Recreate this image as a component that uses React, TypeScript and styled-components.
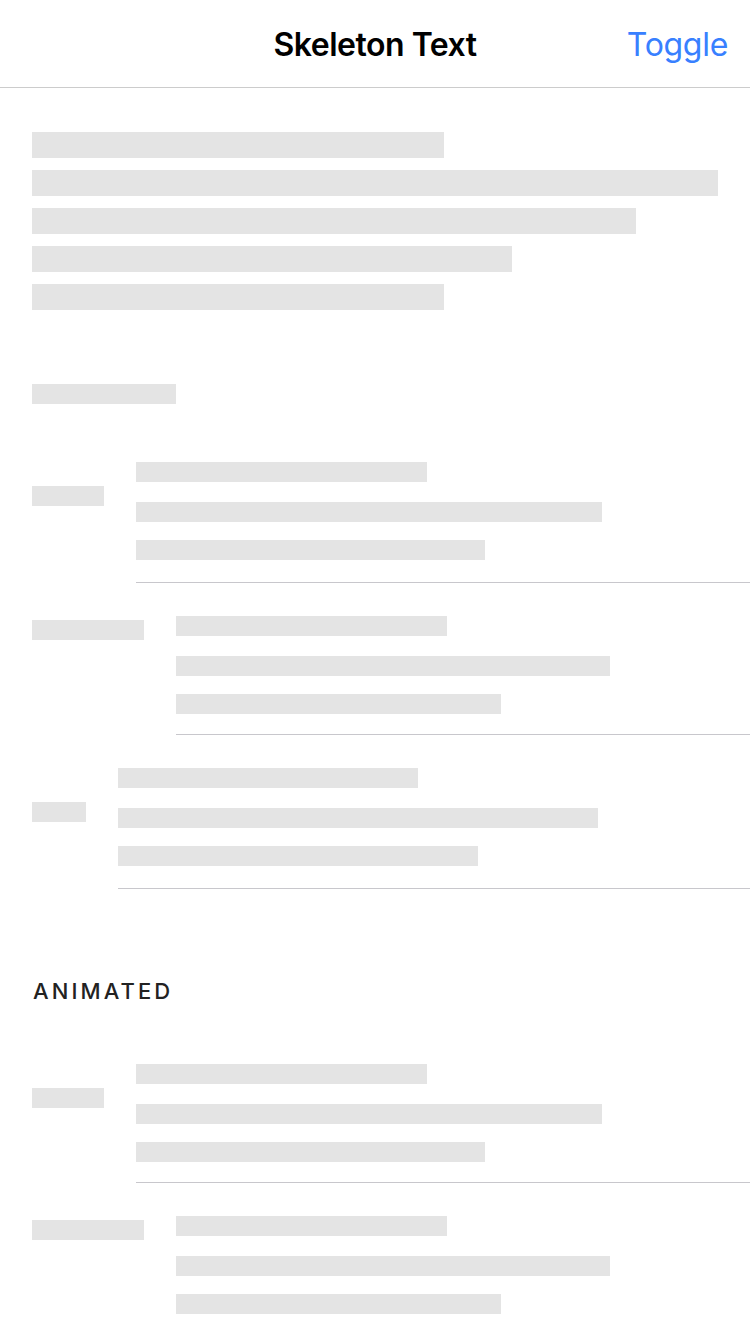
import React from "react";
import styled, { createGlobalStyle } from "styled-components";

const GlobalStyle = createGlobalStyle`
  html, body {
    margin: 0;
    padding: 0;
    background: #ffffff;
    font-family: Inter, "Noto Sans", sans-serif;
  }
`;

const Page = styled.div`
  width: 750px;
  min-height: 1334px;
  background: #ffffff;
  overflow: hidden;
`;

const Toolbar = styled.header`
  display: grid;
  grid-template-columns: 1fr auto 1fr;
  align-items: center;
  height: 87px;
  border-bottom: 1px solid #cccccc;
  padding: 0 22px;
`;

const Title = styled.h1`
  grid-column: 2;
  margin: 0;
  font-size: 32px;
  font-weight: 600;
  color: #000000;
  letter-spacing: -0.5px;
  padding-top: 2px;
`;

const ToggleButton = styled.button`
  justify-self: end;
  border: none;
  background: none;
  padding: 0;
  font-family: Inter, "Noto Sans", sans-serif;
  font-size: 32px;
  font-weight: 400;
  color: #3880ff;
  letter-spacing: -0.3px;
  cursor: pointer;
  padding-top: 2px;
`;

const Paragraph = styled.div`
  display: flex;
  flex-direction: column;
  gap: 12px;
  padding: 44px 32px 0;
`;

const Bone = styled.div<{ $w: string; $h?: number }>`
  width: ${(p) => p.$w};
  height: ${(p) => p.$h ?? 20}px;
  background: #e4e4e4;
  flex: none;
`;

const ListHeader = styled.div`
  padding: 74px 32px 0;
`;

const List = styled.div<{ $top: number }>`
  margin-top: ${(p) => p.$top}px;
`;

const Item = styled.div`
  display: flex;
  align-items: flex-start;
  padding-left: 32px;
`;

const StartBone = styled(Bone)<{ $top: number }>`
  margin-top: ${(p) => p.$top}px;
  margin-right: 32px;
`;

const ItemLabel = styled.div<{ $bottom: number }>`
  flex: 1;
  display: flex;
  flex-direction: column;
  padding: 33px 32px ${(p) => p.$bottom}px 0;
  border-bottom: 1px solid #c8c7cc;
`;

const LineOne = styled(Bone)`
  margin-bottom: 20px;
`;

const LineTwo = styled(Bone)`
  margin-bottom: 18px;
`;

const SectionLabel = styled.div`
  padding: 88px 33px 0;
  font-size: 22px;
  line-height: 28px;
  font-weight: 500;
  letter-spacing: 3.1px;
  color: #222222;
  text-transform: uppercase;
`;

type Row = { start: number; top: number; bottom: number };

const rows: Row[] = [
  { start: 72, top: 57, bottom: 22 },
  { start: 112, top: 37, bottom: 20 },
  { start: 54, top: 67, bottom: 22 },
];

const animatedRows: Row[] = [
  { start: 72, top: 57, bottom: 20 },
  { start: 112, top: 37, bottom: 20 },
];

const SkeletonItem: React.FC<{ row: Row }> = ({ row }) => (
  <Item>
    <StartBone $w={`${row.start}px`} $top={row.top} />
    <ItemLabel $bottom={row.bottom}>
      <LineOne $w="50%" />
      <LineTwo $w="80%" />
      <Bone $w="60%" />
    </ItemLabel>
  </Item>
);

export default function App() {
  return (
    <Page>
      <GlobalStyle />
      <Toolbar>
        <Title>Skeleton Text</Title>
        <ToggleButton>Toggle</ToggleButton>
      </Toolbar>

      <Paragraph>
        <Bone $w="60%" $h={26} />
        <Bone $w="100%" $h={26} />
        <Bone $w="88%" $h={26} />
        <Bone $w="70%" $h={26} />
        <Bone $w="60%" $h={26} />
      </Paragraph>

      <ListHeader>
        <Bone $w="144px" />
      </ListHeader>

      <List $top={25}>
        {rows.map((r, i) => (
          <SkeletonItem key={i} row={r} />
        ))}
      </List>

      <SectionLabel>Animated</SectionLabel>

      <List $top={26}>
        {animatedRows.map((r, i) => (
          <SkeletonItem key={i} row={r} />
        ))}
      </List>
    </Page>
  );
}
